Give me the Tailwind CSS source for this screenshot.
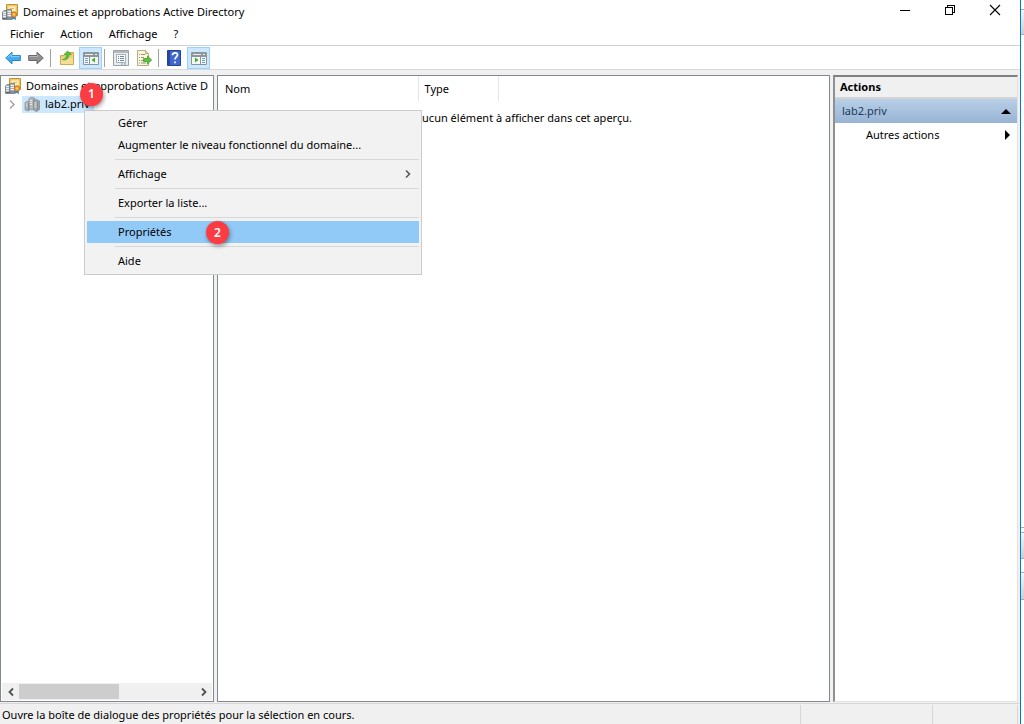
<!DOCTYPE html>
<html lang="fr">
	<head>
		<meta charset="UTF-8" />
		<meta name="viewport" content="width=device-width, initial-scale=1.0" />
		<title>Domaines et approbations Active Directory</title>
		<script src="https://cdn.jsdelivr.net/npm/@tailwindcss/browser@4"></script>
	</head>
	<body class="h-screen flex overflow-hidden bg-white text-black text-[11px] leading-4 font-['Noto_Sans','Open_Sans',sans-serif] cursor-default">
		<!-- shared icons -->
		<svg class="hidden">
			<symbol id="domains" viewBox="0 0 16 16">
				<path d="M4.500.500h11v11h-11z" fill="#f0c766" stroke="#c0913a" />
				<path d="M6.500 2.500h7v5h-7z" fill="#fdf0c0" stroke="#f7dd94" />
				<path d="M8 4.500h4" stroke="#e2b95c" />
				<path d="M.500 8 2 6.500h3V15.500H.500zM4.500 6.500 6 5.500h3.500v10h-5z" fill="#aeb5ba" stroke="#6f787f" stroke-width=".8" />
				<path d="M1 8.500h3M1 10.500h3M1 12.500h3M5.500 7.500H9M5.500 9.500H9M5.500 11.500H9" stroke="#eef2f4" />
				<path d="M1 14.500h3M5 14h4" stroke="#5d676e" />
				<path d="m10.500 12-1 4 2-1.200 2.500 1.200-.5-4z" fill="#2f7fd0" />
				<circle cx="12" cy="10.500" r="2.800" fill="#f29a2a" stroke="#c06c14" stroke-width=".7" />
				<circle cx="12" cy="10.500" r="1.100" fill="#ffd88a" />
			</symbol>
			<symbol id="servers" viewBox="0 0 16 16">
				<path d="M1 6.500 4 5l2 1v8l-2 1-3-1z" fill="#aab0b4" stroke="#8b9195" stroke-width=".7" />
				<path d="M5 2.500 8 1l3 1.500V12l-3 2-3-1.500z" fill="#b5babd" stroke="#888e92" stroke-width=".7" />
				<path d="m9.500 5 3-1.500L15.500 5v8.500l-3 2-3-1.500z" fill="#a0a6aa" stroke="#7c8286" stroke-width=".7" />
				<path d="M2 8h1.500M2 10h1.500M6 4.500h2M6 6.500h2M6 8.500h2M10.500 7h2M10.500 9h2M10.500 11h2" stroke="#e4e9ec" />
				<path d="M9.500 2.500v2M13.500 6v8.500M4.500 7v7" stroke="#7b8185" stroke-width=".8" />
			</symbol>
		</svg>

		<div class="flex-1 min-w-0 flex flex-col border-r border-[#0078d7] bg-[#f0f0f0]">
			<header class="bg-white border-b border-[#d0d0d4]">
				<div class="h-[23px] flex items-center pl-[2px]">
					<svg class="size-4 mr-[5px]"><use href="#domains" /></svg>
					<h1>Domaines et approbations Active Directory</h1>
					<div class="ml-auto flex self-start">
						<button aria-label="Réduire" class="w-[45px] h-5 grid place-items-center">
							<svg class="w-3 h-3" viewBox="0 0 12 12" fill="none" stroke="#000" shape-rendering="crispEdges"><path d="M1 6.500h10" /></svg>
						</button>
						<button aria-label="Restaurer" class="w-[45px] h-5 grid place-items-center">
							<svg class="w-3 h-3" viewBox="0 0 12 12" fill="none" stroke="#000" shape-rendering="crispEdges"><path d="M1.500 3.500h7v7h-7zM3.500 3V1.500h7v7H9" /></svg>
						</button>
						<button aria-label="Fermer" class="w-[45px] h-5 grid place-items-center mr-[3px]">
							<svg class="w-3 h-3" viewBox="0 0 12 12" fill="none" stroke="#000" stroke-width="1.100"><path d="m1 1 10 10M11 1 1 11" /></svg>
						</button>
					</div>
				</div>
				<nav class="h-[22px] flex items-center gap-4 pl-[10px]">
					<button>Fichier</button>
					<button>Action</button>
					<button>Affichage</button>
					<button>?</button>
				</nav>
			</header>

			<!-- toolbar -->
			<div class="h-6 pt-px shrink-0 flex items-center bg-white border-b border-[#d9d9d9]">
				<button aria-label="Précédent" class="w-6 grid place-items-center pl-[2px]">
					<svg class="size-4" viewBox="0 0 16 16"><path d="M.7 8 7 2.200V5.500h8.300v5H7v3.300z" fill="#42acf2" stroke="#2a80c8" /><path d="M2.500 7.700 6.300 4.200v2.200h8" fill="none" stroke="#8fd3fb" /></svg>
				</button>
				<button aria-label="Suivant" class="w-6 grid place-items-center">
					<svg class="size-4" viewBox="0 0 16 16"><path d="M15.300 8 9 2.200V5.500H.7v5H9v3.300z" fill="#8f8f8f" stroke="#686868" /><path d="M1.500 6.500h8.200V4.500" fill="none" stroke="#b5b5b5" /></svg>
				</button>
				<span class="w-px h-[18px] bg-[#a0a0a0] mx-[2px]"></span>
				<button aria-label="Dossier parent" class="w-[26px] h-[22px] grid place-items-center pl-px">
					<svg class="size-4" viewBox="0 0 16 16"><path d="M1.500 5.500h4l1-1.500h3V2.500h5v12h-13z" fill="#f0cf79" stroke="#d0a850" /><path d="M2 8h12v6H2z" fill="#f7dd94" /><path d="M3 9.500C6 9.500 7.500 7.500 7.500 4.500H5L8.500 1l4 3.500H10C10 8.500 7.500 11 3 9.500z" fill="#58c43c" stroke="#38982a" stroke-width=".6" /></svg>
				</button>
				<button aria-label="Arborescence de la console" aria-pressed="true" class="w-[23px] h-[22px] grid place-items-center bg-[#cce8ff] border border-[#99d1ff]">
					<svg class="size-4" viewBox="0 0 16 16"><path d="M.5 2.500h15v12H.5z" fill="#f5f6f6" stroke="#8c959b" /><path d="M1 3h14v3H1z" fill="#8b969d" /><path d="M2 4.500h8M12 4.500h2" stroke="#e8eef2" /><path d="M1 6.500h14M6.500 7v7" stroke="#8c959b" /><path d="M2 8.500h3M2 10.500h3M2 12.500h3" stroke="#6c9fc4" /><path d="M12 7.500v5L8.500 10z" fill="#3fae2a" /></svg>
				</button>
				<span class="w-px h-[18px] bg-[#a0a0a0] mx-[2px]"></span>
				<button aria-label="Propriétés" class="w-[27px] h-[22px] grid place-items-center">
					<svg class="size-4" viewBox="0 0 16 16"><path d="M.5.500h15v15H.5z" fill="#e9edef" stroke="#9aa1a6" /><path d="M1 1h14v2H1z" fill="#b1bac1" /><path d="M3.500 4.500h9v8h-9z" fill="#fff" stroke="#a8b0b6" /><path d="M5 6.500h1M7 6.500h4M5 8.500h1M7 8.500h4M5 10.500h1M7 10.500h4" stroke="#6289ab" /><path d="M8 14h2M11 14h2" stroke="#8b949a" /></svg>
				</button>
				<button aria-label="Exporter la liste" class="w-[20px] h-[22px] grid place-items-center">
					<svg class="size-4" viewBox="0 0 16 16"><path d="M1.500.5h8l3 3v12h-11z" fill="#fdf7d8" stroke="#b5ad84" /><path d="M9.500.5v3h3" fill="#e9dfae" stroke="#b5ad84" /><path d="M3 4.500h1M5 4.500h4M3 7.500h1M5 7.500h3M3 10.500h1M5 10.500h2M3 13h1M5 13h5" stroke="#8f958f" /><path d="M7.500 8.500h4V6l4.200 4-4.200 4v-2.500h-4z" fill="#5cc13f" stroke="#37942a" stroke-width=".7" /></svg>
				</button>
				<span class="w-px h-[18px] bg-[#a0a0a0] mx-[4px]"></span>
				<button aria-label="Aide" class="w-[22px] h-[22px] grid place-items-center">
					<svg class="size-4" viewBox="0 0 16 16"><path d="M1.500.5h13v15h-13z" fill="#3f68cf" stroke="#24429a" /><path d="M2 1h2v14H2z" fill="#2a479d" /><path d="M6.500 5.200c0-3 5-3.200 5-.3 0 2-2.500 2-2.500 4.600M9 11.500v1.800" fill="none" stroke="#fff" stroke-width="1.700" /></svg>
				</button>
				<button aria-label="Volet Actions" aria-pressed="true" class="w-[23px] h-[22px] ml-[2px] grid place-items-center bg-[#cce8ff] border border-[#99d1ff]">
					<svg class="size-4" viewBox="0 0 16 16"><path d="M.5 2.500h15v12H.5z" fill="#f5f6f6" stroke="#8c959b" /><path d="M1 3h14v3H1z" fill="#8b969d" /><path d="M2 4.500h8M12 4.500h2" stroke="#e8eef2" /><path d="M1 6.500h14M9.500 7v7" stroke="#8c959b" /><path d="M11 8.500h3M11 10.500h3M11 12.500h3" stroke="#6c9fc4" /><path d="M4 7.500v5L7.500 10z" fill="#3fae2a" /></svg>
				</button>
			</div>

			<main class="flex-1 min-h-0 flex gap-[3px] pt-[5px] pr-[2px]">
				<!-- console tree -->
				<section class="w-[214px] shrink-0 flex flex-col bg-white border border-[#828790]">
					<ul class="flex-1 pt-px">
						<li>
							<div class="h-[18px] flex items-center pl-1 overflow-hidden whitespace-nowrap">
								<svg class="size-4 shrink-0 mr-[5px]"><use href="#domains" /></svg>Domaines et approbations Active D
							</div>
							<ul>
								<li class="h-[18px] flex items-center pl-[7px]">
									<svg class="w-2 h-3 mr-[6px]" viewBox="0 0 8 12" fill="none" stroke="#a0a0a0" stroke-width="1.400"><path d="m2 2.500 4 4-4 4" /></svg>
									<span class="relative h-[17px] flex items-center bg-[#cce8ff] pl-[2px] pr-1">
										<svg class="size-4 mr-[5px]"><use href="#servers" /></svg>lab2.priv
										<span class="absolute z-20 -top-[13px] left-[58px] size-[23px] rounded-full bg-[#fb3d43] text-white text-xs font-semibold grid place-items-center shadow-[1px_2px_4px_rgba(0,0,0,0.4)]">1</span>
									</span>
								</li>
							</ul>
						</li>
					</ul>
					<div class="h-[17px] mx-px mb-px flex items-center bg-[#f0f0f0]">
						<button aria-label="Défiler à gauche" class="w-[17px] h-full grid place-items-center">
							<svg class="size-[10px]" viewBox="0 0 10 10" fill="none" stroke="#505050" stroke-width="1.800"><path d="M7 1.500 3.500 5 7 8.500" /></svg>
						</button>
						<div class="flex-1 h-[15px]"><div class="w-[57%] h-full bg-[#cdcdcd]"></div></div>
						<button aria-label="Défiler à droite" class="w-[17px] h-full grid place-items-center">
							<svg class="size-[10px]" viewBox="0 0 10 10" fill="none" stroke="#505050" stroke-width="1.800"><path d="M3 1.500 6.500 5 3 8.500" /></svg>
						</button>
					</div>
				</section>

				<!-- list -->
				<section class="flex-1 min-w-0 bg-white border border-[#828790]">
					<table class="w-full table-fixed">
						<thead>
							<tr class="h-[25px] text-left">
								<th class="w-[200px] pl-[7px] font-normal border-r border-[#e5e5e5]">Nom</th>
								<th class="w-[80px] pl-[6px] font-normal border-r border-[#e5e5e5]">Type</th>
								<th></th>
							</tr>
						</thead>
						<tbody>
							<tr class="h-[34px]">
								<td colspan="3" class="text-center">Aucun élément à afficher dans cet aperçu.</td>
							</tr>
						</tbody>
					</table>
				</section>

				<!-- actions -->
				<aside class="w-[185px] shrink-0 bg-white border-t-2 border-l-2 border-r border-b border-t-[#808080] border-l-[#909090] border-r-[#e3e3e3] border-b-[#e3e3e3]">
					<h2 class="h-[22px] pl-[5px] flex items-center font-bold bg-[#f0f0f0] border-b-2 border-[#d4d4d4]">Actions</h2>
					<button class="w-full h-6 pl-[7px] pr-[6px] flex items-center justify-between text-[#1e395b] bg-linear-to-b from-[#b8cfe7] to-[#98b4d4]">
						lab2.priv
						<svg class="w-[10px] h-[5px]" viewBox="0 0 10 5"><path d="M0 5 5 0l5 5z" fill="#000" /></svg>
					</button>
					<button class="w-full h-6 pl-[31px] pr-[7px] flex items-center justify-between">
						Autres actions
						<svg class="w-[5px] h-[10px]" viewBox="0 0 5 10"><path d="m0 0 5 5-5 5z" /></svg>
					</button>
				</aside>
			</main>

			<footer class="h-[21px] mt-px shrink-0 flex border-t border-[#d7d7d7]">
				<p class="flex-1 pl-[2px] pt-[3px]">Ouvre la boîte de dialogue des propriétés pour la sélection en cours.</p>
				<span class="w-[132px] mt-px border-l border-[#d7d7d7]"></span>
				<span class="w-[86px] mt-px mr-[2px] border-x border-[#d7d7d7]"></span>
			</footer>
		</div>

		<!-- edge of the window behind -->
		<div class="w-[3px] shrink-0 flex flex-col bg-white">
			<div class="h-[26px] mt-[9px] bg-linear-to-b from-[#f4f4f4] to-[#cfcfcf] border-y border-[#acacac]"></div>
			<div class="mt-auto h-px bg-[#acacac]"></div>
			<div class="h-[27px] mt-1 bg-linear-to-b from-[#f4f4f4] to-[#cfcfcf] border-y border-[#acacac]"></div>
			<div class="h-[28px] mt-[13px] mb-[124px] bg-linear-to-b from-[#f4f4f4] to-[#cfcfcf] border-y border-[#acacac]"></div>
		</div>

		<!-- context menu -->
		<div role="menu" class="absolute z-10 left-[84px] top-[110px] w-[338px] px-[2px] pt-px pb-[2px] bg-[#f2f2f2] border border-[#cccccc]">
			<button role="menuitem" class="w-full h-[22px] pl-[31px] flex items-center">Gérer</button>
			<button role="menuitem" class="w-full h-[22px] pl-[31px] flex items-center">Augmenter le niveau fonctionnel du domaine...</button>
			<hr class="my-[3px] ml-7 border-[#d7d7d7]" />
			<button role="menuitem" class="w-full h-[22px] pl-[31px] pr-[6px] flex items-center justify-between">
				Affichage
				<svg class="size-[10px]" viewBox="0 0 10 10" fill="none" stroke="#555" stroke-width="1.500"><path d="m3 1.500 3.500 3.500L3 8.500" /></svg>
			</button>
			<hr class="my-[3px] ml-7 border-[#d7d7d7]" />
			<button role="menuitem" class="w-full h-[22px] pl-[31px] flex items-center">Exporter la liste...</button>
			<hr class="my-[3px] ml-7 border-[#d7d7d7]" />
			<button role="menuitem" class="relative w-full h-[22px] pl-[31px] flex items-center bg-[#91c9f7]">
				Propriétés
				<span class="absolute left-[119px] top-0 size-[23px] rounded-full bg-[#fb3d43] text-white text-xs font-semibold grid place-items-center shadow-[1px_2px_4px_rgba(0,0,0,0.4)]">2</span>
			</button>
			<hr class="my-[3px] ml-7 border-[#d7d7d7]" />
			<button role="menuitem" class="w-full h-[22px] pl-[31px] flex items-center">Aide</button>
		</div>
	</body>
</html>
